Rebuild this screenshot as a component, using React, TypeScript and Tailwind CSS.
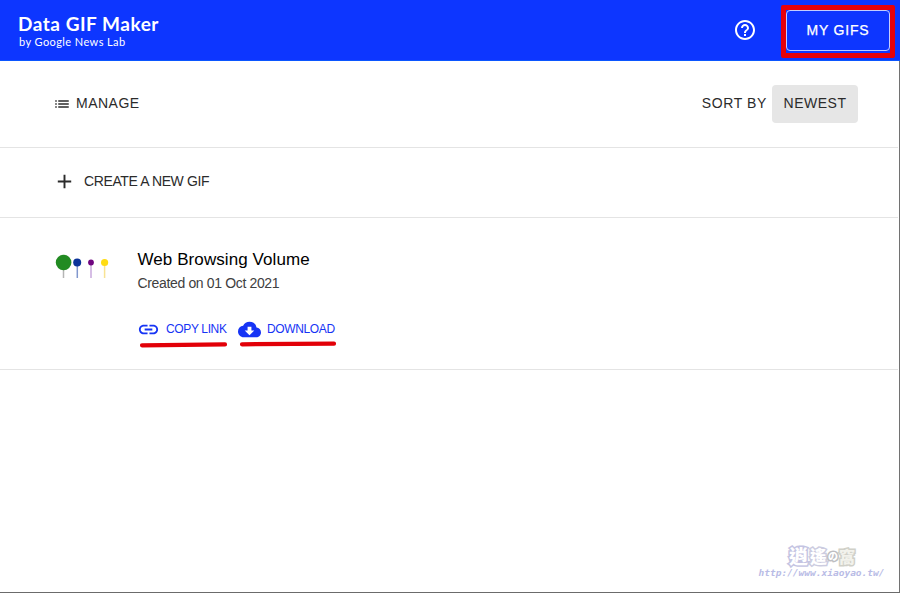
import React from "react";
import { MdHelpOutline, MdList, MdAdd, MdLink, MdCloudDownload } from "react-icons/md";

function Header() {
  return (
    <header className="flex h-[61px] shrink-0 items-start justify-between border-b border-[#0b56ff] bg-[#0d36ff] text-white">
      <div className="pt-[13px] pl-[18px] whitespace-nowrap">
        <h1 className="font-['Lato',sans-serif] text-[19px] leading-[22px] font-bold tracking-[0.52px]">Data GIF Maker</h1>
        <p className="pl-px font-['Lato',sans-serif] text-[11px] leading-[13px] tracking-[0.42px]">by Google News Lab</p>
      </div>
      <div className="flex items-start pt-[5px] pr-[5px]">
        <MdHelpOutline className="mt-[13px] mr-6 size-6" />
        <div className="h-[53px] w-[114px] rounded-[2px] border-[5px] border-[#e80008]">
          <button className="flex h-[42px] w-[104px] items-start">
            <span className="flex h-[41px] w-[104px] items-center justify-center rounded-[4px] border border-[#c3cdff] pb-px text-[14px] tracking-[0.8px] [-webkit-text-stroke:0.25px_white]">
              MY GIFS
            </span>
          </button>
        </div>
      </div>
    </header>
  );
}

function Pins() {
  return (
    <svg className="mt-[35px] ml-[55px] h-7 w-[55px] shrink-0" viewBox="0 0 55 28">
      <path d="M8.5 10V25" stroke="#b5b5b5" strokeWidth="1.5" />
      <path d="M22.3 10V25" stroke="#8197cd" strokeWidth="1.5" />
      <path d="M36 10V25" stroke="#c8a8dc" strokeWidth="1.5" />
      <path d="M49.6 10V25" stroke="#f8e394" strokeWidth="1.5" />
      <circle cx="8.6" cy="9.5" r="7.8" fill="#228b22" />
      <circle cx="22.2" cy="9.5" r="4" fill="#0b3399" />
      <circle cx="36" cy="9.5" r="2.9" fill="#6f0580" />
      <circle cx="49.6" cy="9.5" r="3.6" fill="#ffdc12" />
    </svg>
  );
}

function Watermark() {
  return (
    <div className="mr-[13px] flex w-[128px] flex-col">
      <div className="flex h-[25px] items-center pl-[31px] font-['Noto_Sans_CJK_TC',sans-serif] font-black text-white">
        <span className="w-[21px] text-[19px] leading-6 [paint-order:stroke] [-webkit-text-stroke:3px_#c4c4e2]">逍</span>
        <span className="w-[18px] text-[17px] leading-6 [paint-order:stroke] [-webkit-text-stroke:3px_#cccce0]">遙</span>
        <span className="w-[11px] text-[10px] leading-6 [paint-order:stroke] [-webkit-text-stroke:3px_#bebec2]">の</span>
        <span className="w-[17px] text-[16px] leading-6 text-[#f2f2ec] [paint-order:stroke] [-webkit-text-stroke:3px_#d0d0c8]">窩</span>
      </div>
      <svg className="h-3 w-[128px]" viewBox="0 0 128 12">
        <text x="0.5" y="8" textLength="126" lengthAdjust="spacingAndGlyphs" fontFamily="'DejaVu Sans Mono', monospace" fontSize="9" fontWeight="700" fontStyle="italic" fill="#b9bce6">
          http://www.xiaoyao.tw/
        </text>
      </svg>
    </div>
  );
}

export default function App() {
  return (
    <div className="flex h-[593px] w-[900px] flex-col overflow-hidden border-b border-[#6b6b6b] bg-white font-['Liberation_Sans',Arial,sans-serif] whitespace-nowrap text-[#2b2b2b]">
      <Header />
      <main className="flex flex-1 flex-col border-r border-[#727272]">
        <section className="mr-px flex h-[87px] shrink-0 items-start justify-between border-b border-[#e4e4e4] pt-6 pr-10 text-[14px]">
          <div className="flex h-[38px] items-center pl-[53px] tracking-[0.5px]">
            <MdList className="mr-[5px] size-[18px]" />
            <span className="pb-px">MANAGE</span>
          </div>
          <div className="flex h-[38px] items-center tracking-[0.6px]">
            <span className="mr-[5px] pb-px">SORT BY</span>
            <button className="flex h-[38px] w-[86px] items-center justify-center rounded-[4px] bg-[#e6e6e6] pb-px tracking-[0.5px]">NEWEST</button>
          </div>
        </section>
        <section className="mr-px flex h-[70px] shrink-0 items-center border-b border-[#e4e4e4] pl-[53px] text-[14px] tracking-[-0.38px]">
          <MdAdd className="mr-2 mb-[2px] size-[23px]" />
          <span className="pb-[3px]">CREATE A NEW GIF</span>
        </section>
        <section className="mr-px flex h-[152px] shrink-0 border-b border-[#e4e4e4]">
          <Pins />
          <div className="ml-[27px] pt-[31px]">
            <h2 className="pl-[0.5px] text-[17px] leading-[22px] tracking-[0.08px] text-black">Web Browsing Volume</h2>
            <p className="mt-[3px] pl-[0.5px] text-[14px] leading-[18px] tracking-[-0.35px] text-[#404040]">Created on 01 Oct 2021</p>
            <div className="mt-[25px] flex h-6 items-center text-[12px] tracking-[-0.36px] text-[#1634f5]">
              <MdLink className="mr-[6px] size-[23px]" />
              <span className="w-[72px]">COPY LINK</span>
              <MdCloudDownload className="mr-[6px] size-[23px]" />
              <span>DOWNLOAD</span>
            </div>
            <svg className="h-[8px] w-[202px]" viewBox="0 0 202 8" fill="none" stroke="#e20008" strokeLinecap="round" strokeWidth="4.2">
              <path d="M5 4.3Q45 3.9 88 3.4" />
              <path d="M105 3.3Q150 3 197 2.7" />
            </svg>
          </div>
        </section>
        <footer className="mt-auto flex justify-end pb-[12px]">
          <Watermark />
        </footer>
      </main>
    </div>
  );
}
